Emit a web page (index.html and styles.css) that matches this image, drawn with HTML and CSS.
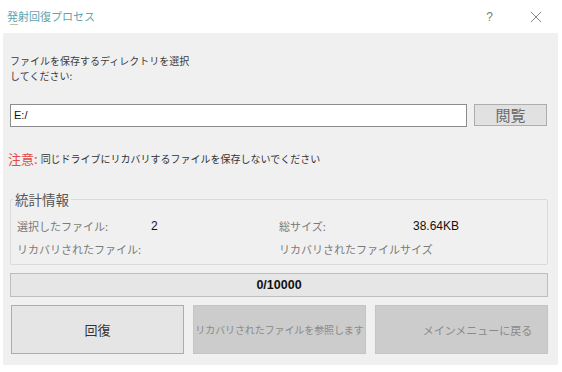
FILE: index.html
```html
<!DOCTYPE html>
<html lang="ja">
<head>
<meta charset="utf-8">
<title>発射回復プロセス</title>
<link rel="stylesheet" href="styles.css">
</head>
<body>
<div class="window">
  <header class="titlebar">
    <div class="title">発射回復プロセス<span class="title-mark"></span></div>
    <div class="controls">
      <span class="help">?</span>
      <svg class="close" width="12" height="12" viewBox="0 0 12 12"><path d="M1 1 L11 11 M11 1 L1 11" stroke="#8a8a8a" stroke-width="1" fill="none"/></svg>
    </div>
  </header>
  <main class="panel">
    <div class="dir-label">ファイルを保存するディレクトリを選択<br>してください:</div>
    <div class="path-row">
      <div class="path-input">E:/</div>
      <div class="browse-btn">閲覧</div>
    </div>
    <div class="notice"><span class="notice-key">注意:</span><span class="notice-text">同じドライブにリカバリするファイルを保存しないでください</span></div>
    <fieldset class="stats">
      <legend>統計情報</legend>
      <div class="stats-grid">
        <span class="lbl">選択したファイル:</span><span class="val">2</span><span class="lbl">総サイズ:</span><span class="val">38.64KB</span>
        <span class="lbl">リカバリされたファイル:</span><span class="val"></span><span class="lbl">リカバリされたファイルサイズ</span><span class="val"></span>
      </div>
    </fieldset>
    <div class="progress">0/10000</div>
    <div class="actions">
      <div class="btn btn-primary">回復</div>
      <div class="btn btn-disabled btn-small">リカバリされたファイルを参照します</div>
      <div class="btn btn-disabled btn-menu">メインメニューに戻る</div>
    </div>
  </main>
</div>
</body>
</html>
```
FILE: styles.css
```css
* { box-sizing: border-box; }
html, body {
  margin: 0;
  padding: 0;
  background: #ffffff;
  font-family: "Noto Sans CJK JP", "Liberation Sans", sans-serif;
}
.window {
  width: 562px;
  height: 372px;
  overflow: hidden;
}
.titlebar {
  height: 33px;
  display: flex;
  align-items: flex-start;
  justify-content: space-between;
  background: #ffffff;
}
.title {
  position: relative;
  margin: 8px 0 0 7px;
  font-size: 11px;
  line-height: 16px;
  color: #5aa6b2;
}
.title-mark {
  position: absolute;
  left: 3px;
  top: 16px;
  width: 8px;
  height: 1px;
  background: #b9c79a;
}
.controls {
  display: flex;
  align-items: center;
  margin: 10px 20px 0 0;
  gap: 37px;
}
.help {
  font-family: "Liberation Sans", sans-serif;
  font-size: 12px;
  color: #7a7a7a;
  line-height: 14px;
}
.close { display: block; }
.panel {
  margin: 0 4px 0 3px;
  height: 332px;
  background: #f0f0f0;
  padding: 21px 9px 0 7px;
}
.dir-label {
  font-size: 10px;
  line-height: 14.5px;
  color: #3c3c3c;
}
.path-row {
  display: flex;
  margin-top: 21px;
  gap: 7px;
}
.path-input {
  width: 457px;
  height: 23px;
  background: #ffffff;
  border: 1px solid #8c8c8c;
  font-family: "Liberation Sans", "Noto Sans CJK JP", sans-serif;
  font-size: 11px;
  line-height: 21px;
  padding-left: 3px;
  color: #111;
}
.browse-btn {
  width: 73px;
  height: 22px;
  background: #e1e1e1;
  border: 1px solid #adadad;
  font-size: 15px;
  line-height: 19px;
  text-align: center;
  color: #6a6a6a;
}
.notice {
  display: flex;
  align-items: center;
  margin-top: 22px;
  margin-left: -2px;
  height: 18px;
}
.notice-key {
  font-size: 13px;
  color: #e24a4a;
  margin-right: 3px;
}
.notice-text {
  font-size: 10px;
  color: #333;
}
.stats {
  margin: 24px 0 0 0;
  padding: 0 0 4px 0;
  width: 538px;
  border: 1px solid #dadada;
  border-radius: 2px;
}
.stats legend {
  margin-left: 2px;
  padding: 0 2px;
  font-size: 13.5px;
  line-height: 16px;
  color: #555;
}
.stats-grid {
  display: grid;
  grid-template-columns: 134px 128px 134px 1fr;
  grid-auto-rows: 23px;
  align-items: center;
  padding: 7px 0 0 6px;
}
.lbl {
  font-size: 11px;
  color: #7a7a7a;
  white-space: nowrap;
}
.val {
  font-family: "Liberation Sans", sans-serif;
  font-size: 12px;
  color: #111;
}
.progress {
  margin-top: 8px;
  width: 538px;
  height: 24px;
  background: #e6e6e6;
  border: 1px solid #bdbdbd;
  font-family: "Liberation Sans", sans-serif;
  font-weight: bold;
  font-size: 12.5px;
  line-height: 22px;
  text-align: center;
  color: #111;
}
.actions {
  display: flex;
  margin-top: 8px;
  margin-left: 1px;
  gap: 9px;
}
.btn {
  width: 173px;
  height: 49px;
  display: flex;
  align-items: center;
  justify-content: center;
  white-space: nowrap;
}
.btn-primary {
  background: #e5e5e5;
  border: 1px solid #adadad;
  font-size: 13px;
  color: #333;
}
.btn-disabled {
  background: #cccccc;
  border: 1px solid #c4c4c4;
  color: #8a8a8a;
}
.btn-small {
  font-size: 10px;
  letter-spacing: -0.1px;
}
.btn-menu {
  font-size: 11px;
  padding-left: 32px;
}
```
